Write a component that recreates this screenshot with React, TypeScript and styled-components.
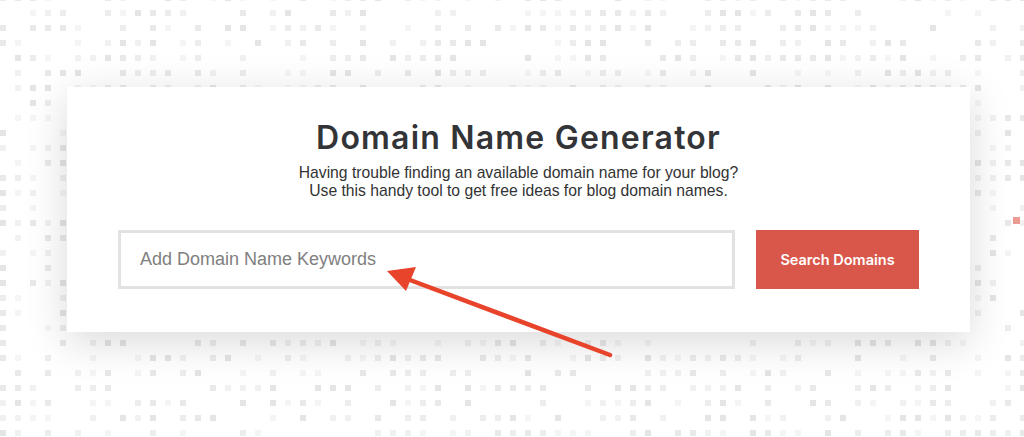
import React from "react";
import styled, { createGlobalStyle } from "styled-components";

const GlobalStyle = createGlobalStyle`
  html, body {
    margin: 0;
    padding: 0;
    background: #ffffff;
  }
  * {
    box-sizing: border-box;
  }
`;

// deterministic pseudo random so the dot pattern is stable between renders
const makeRandom = (seed: number) => {
  let s = seed;
  return () => {
    s = (s * 1103515245 + 12345) % 2147483648;
    return s / 2147483648;
  };
};

const SHADES = ["#f5f5f5", "#f1f1f1", "#ededed", "#e9e9e9", "#e5e5e5"];

const DotGrid = () => {
  const rand = makeRandom(42);
  const dots: React.ReactNode[] = [];
  for (let row = 0; row < 30; row++) {
    for (let col = 0; col < 69; col++) {
      const r = rand();
      if (r < 0.35) continue;
      const shade = SHADES[Math.floor(rand() * SHADES.length)];
      dots.push(
        <rect
          key={`${row}-${col}`}
          x={col * 15}
          y={row * 15 - 5}
          width={6}
          height={6}
          fill={shade}
        />
      );
    }
  }
  return (
    <Backdrop width="1024" height="437" viewBox="0 0 1024 437">
      {dots}
      <rect x={1013} y={217} width={7} height={7} fill="#ec9a94" />
    </Backdrop>
  );
};

const App = () => {
  return (
    <>
      <GlobalStyle />
      <Page>
        <DotGrid />
        <Card>
          <Title>Domain Name Generator</Title>
          <Subtitle>
            Having trouble finding an available domain name for your blog?
            <br />
            Use this handy tool to get free ideas for blog domain names.
          </Subtitle>
          <SearchRow>
            <KeywordInput placeholder="Add Domain Name Keywords" />
            <SearchButton>Search Domains</SearchButton>
          </SearchRow>
        </Card>
        <Arrow width="1024" height="437" viewBox="0 0 1024 437">
          <line
            x1={610}
            y1={355}
            x2={402}
            y2={277}
            stroke="#e8432b"
            strokeWidth={4.5}
            strokeLinecap="round"
          />
          <polygon points="387,271 416,267 406,291" fill="#e8432b" />
        </Arrow>
      </Page>
    </>
  );
};

const Page = styled.div`
  position: relative;
  width: 1024px;
  height: 437px;
  overflow: hidden;
  padding: 87px 54px 0 67px;
`;

const Backdrop = styled.svg`
  position: absolute;
  inset: 0;
`;

const Arrow = styled.svg`
  position: absolute;
  inset: 0;
  pointer-events: none;
`;

const Card = styled.div`
  position: relative;
  width: 903px;
  height: 245px;
  background: #ffffff;
  box-shadow: 0 10px 40px rgba(0, 0, 0, 0.15);
  display: flex;
  flex-direction: column;
  align-items: center;
  padding: 31px 51px 0;
`;

const Title = styled.h1`
  margin: 0;
  font-family: Inter, "DejaVu Sans", sans-serif;
  font-weight: 600;
  font-size: 32px;
  line-height: 40px;
  color: #333437;
  letter-spacing: 1.2px;
`;

const Subtitle = styled.p`
  margin: 6px 0 0;
  font-family: "Liberation Sans", Arial, sans-serif;
  font-size: 15.7px;
  line-height: 18px;
  color: #333333;
  text-align: center;
`;

const SearchRow = styled.div`
  margin-top: 30px;
  width: 100%;
  display: flex;
  gap: 21px;
`;

const KeywordInput = styled.input`
  flex: 1;
  height: 59px;
  border: 3px solid #e2e2e2;
  padding: 0 19px;
  font-family: "Liberation Sans", Arial, sans-serif;
  font-size: 18px;
  color: #444;
  outline: none;
  &::placeholder {
    color: #808080;
  }
`;

const SearchButton = styled.button`
  width: 163px;
  height: 59px;
  border: none;
  background: #d9574a;
  color: #ffffff;
  font-family: Inter, "Liberation Sans", sans-serif;
  font-weight: 600;
  font-size: 14.5px;
  cursor: pointer;
`;

export default App;
